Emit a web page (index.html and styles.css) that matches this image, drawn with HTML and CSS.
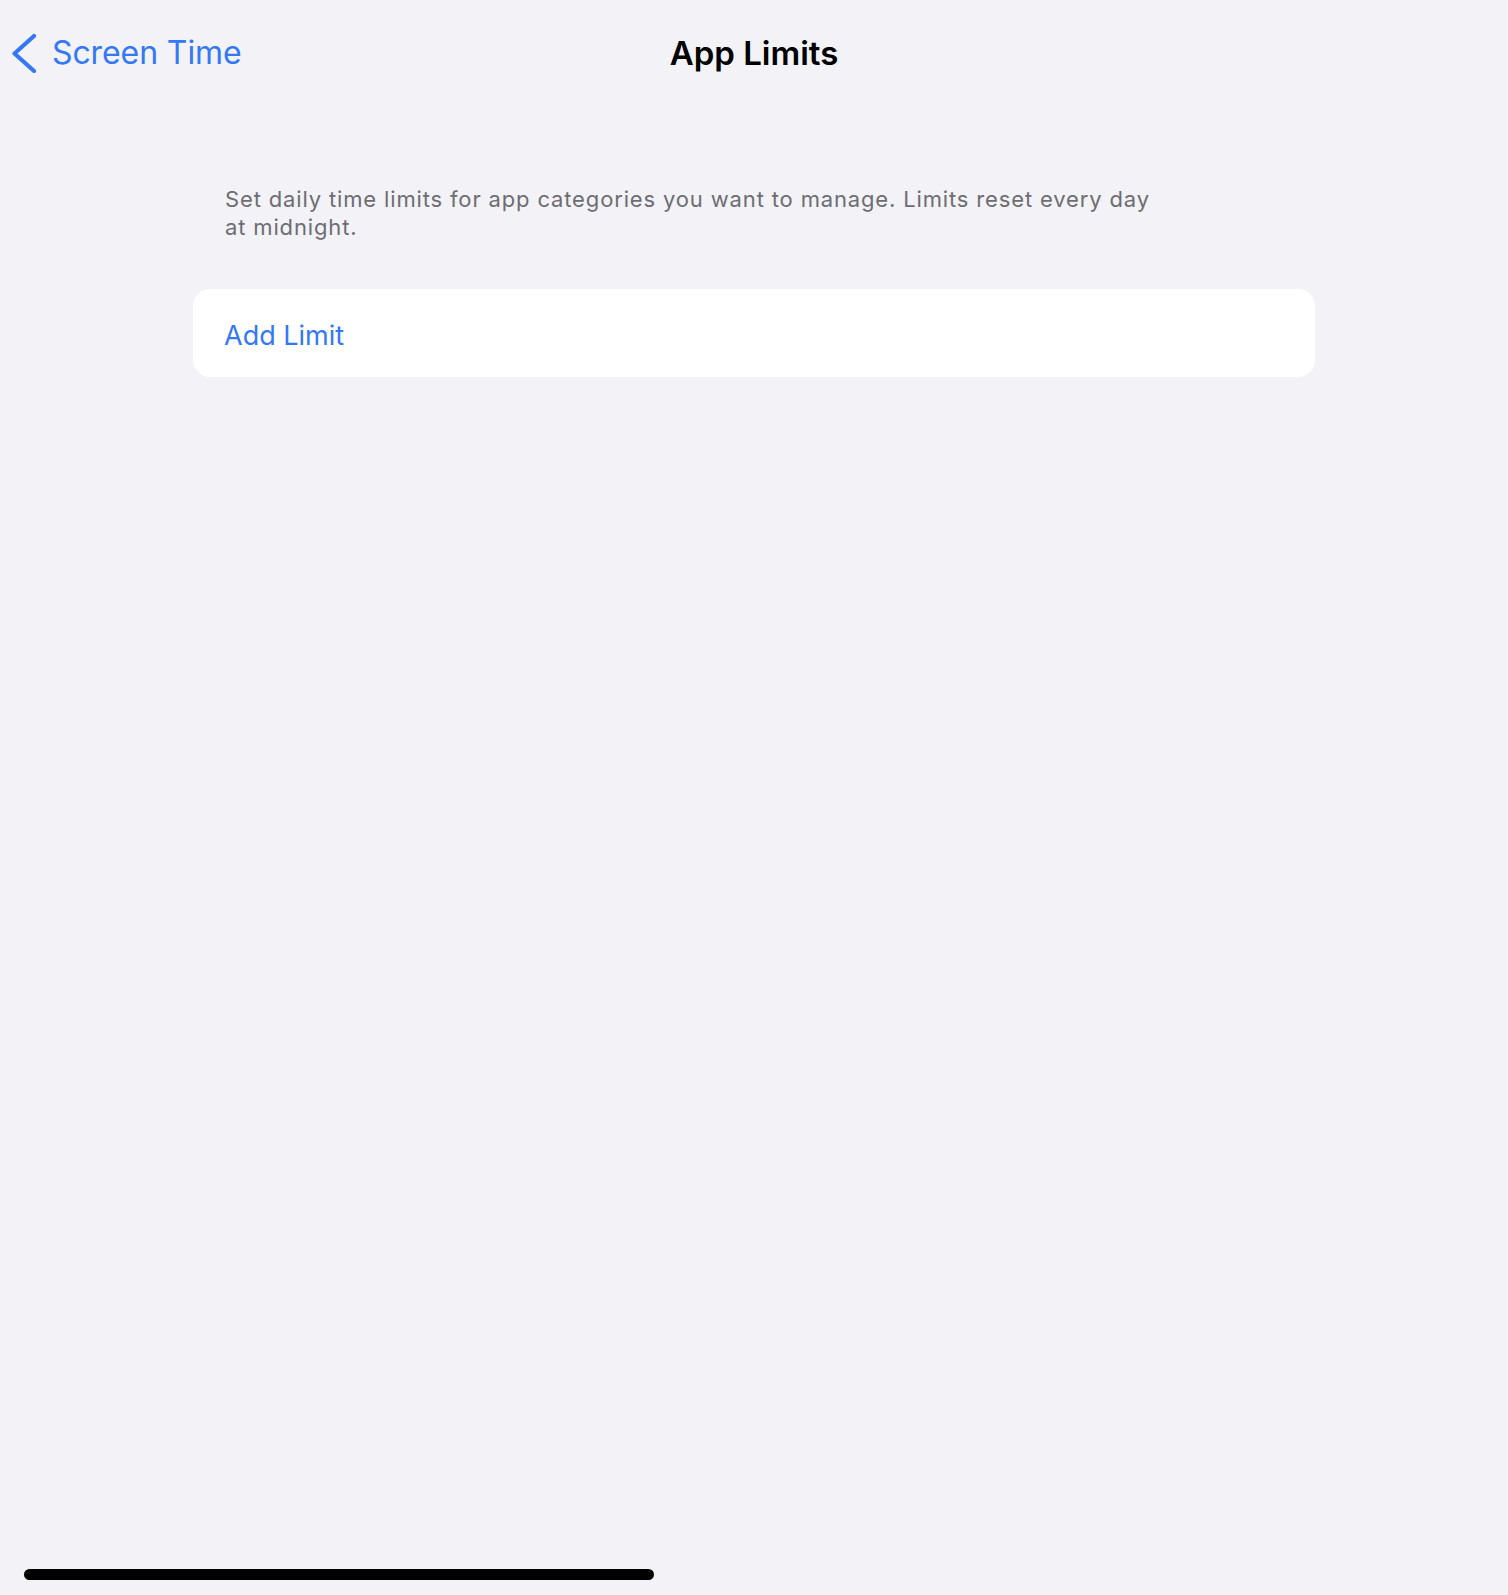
FILE: index.html
```html
<!DOCTYPE html>
<html lang="en">
<head>
<meta charset="utf-8">
<title>App Limits</title>
<link rel="stylesheet" href="styles.css">
</head>
<body>
<div class="page">
  <header class="navbar">
    <a class="back" href="#">
      <svg class="chevron" width="26" height="40" viewBox="0 0 26 40" aria-hidden="true">
        <path d="M23 3 L3.5 20.5 L23 38" fill="none" stroke="currentColor" stroke-width="4.2" stroke-linecap="round" stroke-linejoin="round"/>
      </svg>
      <span class="back-label">Screen Time</span>
    </a>
    <h1 class="title">App Limits</h1>
    <div class="spacer"></div>
  </header>
  <main class="content">
    <p class="footer-text">Set daily time limits for app categories you want to manage. Limits reset every day at midnight.</p>
    <div class="card">
      <a class="row-link" href="#">Add Limit</a>
    </div>
  </main>
  <div class="home-indicator"></div>
</div>
</body>
</html>
```
FILE: styles.css
```css
html, body {
  margin: 0;
  padding: 0;
  background: #f2f2f7;
}
body {
  font-family: Inter, "Liberation Sans", Arial, sans-serif;
  -webkit-font-smoothing: antialiased;
}
.page {
  min-height: 100vh;
  display: flex;
  flex-direction: column;
}
.navbar {
  display: grid;
  grid-template-columns: 1fr auto 1fr;
  align-items: center;
  padding: 33px 11px 0 11px;
  height: 40px;
}
.back {
  display: flex;
  align-items: center;
  gap: 15px;
  color: #3478f6;
  text-decoration: none;
  justify-self: start;
}
.chevron {
  display: block;
}
.back-label {
  font-size: 32px;
  line-height: 40px;
  letter-spacing: -0.1px;
}
.title {
  margin: 0;
  font-size: 33px;
  line-height: 40px;
  font-weight: 600;
  color: #000;
  letter-spacing: 0;
}
.content {
  width: 1122px;
  margin: 0 auto;
  padding-top: 112px;
}
.footer-text {
  margin: 0 0 48px 0;
  padding: 0 32px;
  max-width: 936px;
  font-size: 22px;
  line-height: 28px;
  letter-spacing: 0.85px;
  color: #6d6d72;
}
.card {
  box-sizing: border-box;
  background: #fff;
  border-radius: 17px;
  height: 88px;
  display: flex;
  align-items: center;
  padding: 5px 31px 0 31px;
}
.row-link {
  color: #3478f6;
  text-decoration: none;
  font-size: 27px;
  line-height: 78px;
}
.home-indicator {
  margin-top: auto;
  margin-left: 24px;
  margin-bottom: 15px;
  width: 630px;
  height: 11px;
  border-radius: 6px;
  background: #000;
}
```
